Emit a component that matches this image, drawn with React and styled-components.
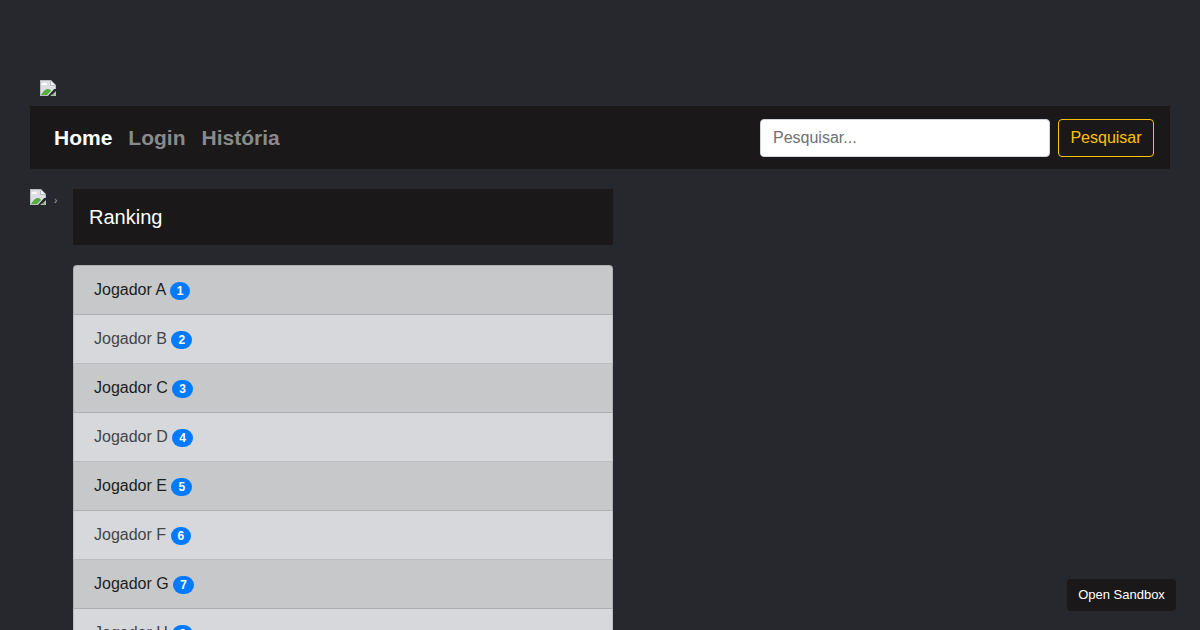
import React from "react";
import styled, { createGlobalStyle } from "styled-components";

const GlobalStyle = createGlobalStyle`
  *, *::before, *::after {
    box-sizing: border-box;
  }
  body {
    margin: 0;
    background: #27282d;
    font-family: "Liberation Sans", Arial, sans-serif;
    font-size: 16px;
    line-height: 24px;
    color: #212529;
    scrollbar-width: none;
  }
`;

const Page = styled.div`
  padding: 70px 30px 30px;
`;

const Logo = styled.a`
  display: flex;
  padding: 10px;
`;

const Icon = styled.svg`
  display: block;
  flex: none;
  width: 16px;
  height: 16px;
`;

const Navbar = styled.nav`
  display: flex;
  align-items: center;
  justify-content: space-between;
  padding: 8px 16px;
  background: #1b1819;
`;

const Links = styled.div`
  display: flex;
`;

const NavLink = styled.a`
  padding: 8px;
  font-size: 21px;
  line-height: 31px;
  font-weight: bold;
  text-decoration: none;
  color: ${({ $active }) => ($active ? "#fff" : "#898a8c")};
`;

const SearchForm = styled.form`
  display: flex;
  gap: 8px;
`;

const SearchInput = styled.input`
  width: 290px;
  height: 38px;
  padding: 6px 12px;
  border: 1px solid #ced4da;
  border-radius: 4px;
  background: #fff;
  font: inherit;
  color: #495057;

  &::placeholder {
    color: #6f7174;
    opacity: 1;
  }
`;

const SearchButton = styled.button`
  width: 96px;
  height: 38px;
  padding: 0;
  border: 1px solid #ffc107;
  border-radius: 4px;
  background: transparent;
  font: inherit;
  color: #ffc107;
`;

const Content = styled.main`
  display: flex;
  align-items: flex-start;
  margin-top: 20px;
`;

const Banner = styled.div`
  display: flex;
  align-items: flex-start;
  gap: 8px;
  flex: none;
  width: 43px;
`;

const Arrow = styled.span`
  font-size: 10px;
  color: #a4a5a8;
`;

const Board = styled.section`
  flex: 0 1 540px;
`;

const Title = styled.h1`
  margin: 0 0 20px;
  padding: 16px;
  background: #1b1819;
  font-size: 20px;
  line-height: 24px;
  font-weight: normal;
  color: #fff;
`;

const List = styled.ul`
  margin: 0;
  padding: 0;
  list-style: none;
`;

const Item = styled.li`
  padding: 12px 20px;
  border: 1px solid rgba(0, 0, 0, 0.125);
  background: ${({ $dark }) => ($dark ? "#c6c8ca" : "#d6d8db")};
  color: ${({ $dark }) => ($dark ? "#1b1e21" : "#444549")};

  & + & {
    border-top: 0;
  }
  &:first-child {
    border-radius: 4px 4px 0 0;
  }
  &:last-child {
    border-radius: 0 0 4px 4px;
  }
`;

const Badge = styled.span`
  display: inline-block;
  padding: 3px 7px;
  border-radius: 160px;
  background: #007bff;
  font-size: 12px;
  line-height: 12px;
  font-weight: bold;
  color: #fff;
  vertical-align: baseline;
`;

const SandboxButton = styled.button`
  position: fixed;
  right: 24px;
  bottom: 19px;
  width: 109px;
  height: 32px;
  padding: 0;
  border: 0;
  border-radius: 4px;
  background: #1b1819;
  font-family: inherit;
  font-size: 13px;
  line-height: 16px;
  color: #fff;
`;

const players = ["A", "B", "C", "D", "E", "F", "G", "H", "I", "J"];

function PictureIcon() {
  return (
    <Icon viewBox="0 0 16 16" aria-hidden="true">
      <path d="M0 0h11l5 5v4h-2l-6 7H0z" fill="#b9bbbe" />
      <path d="M1 1h9v5h5v3h-1l-6 6H1z" fill="#dcdee3" />
      <path d="M1 5c1-2 2-2 3-2 1-1 3 0 3 2z" fill="#fff" />
      <path d="M11 1l4 4h-4z" fill="#f3f3f5" />
      <path d="M1 15c2-3 3-5 6-6 2 0 3 0 4 2l-4 4z" fill="#58ab3f" />
      <path d="M16 11v5h-6l3-2z" fill="#b9bbbe" />
      <path d="M14 13v2h-3z" fill="#58ab3f" />
    </Icon>
  );
}

export default function App() {
  return (
    <>
      <GlobalStyle />
      <Page>
        <Logo href="#" aria-label="Home">
          <PictureIcon />
        </Logo>
        <Navbar>
          <Links>
            <NavLink href="#" $active>
              Home
            </NavLink>
            <NavLink href="#login">Login</NavLink>
            <NavLink href="#historia">História</NavLink>
          </Links>
          <SearchForm role="search" onSubmit={(e) => e.preventDefault()}>
            <SearchInput
              type="search"
              placeholder="Pesquisar..."
              aria-label="Pesquisar"
            />
            <SearchButton type="submit">Pesquisar</SearchButton>
          </SearchForm>
        </Navbar>
        <Content>
          <Banner>
            <PictureIcon />
            <Arrow>›</Arrow>
          </Banner>
          <Board>
            <Title>Ranking</Title>
            <List>
              {players.map((player, i) => (
                <Item key={player} $dark={i % 2 === 0}>
                  Jogador {player} <Badge>{i + 1}</Badge>
                </Item>
              ))}
            </List>
          </Board>
        </Content>
      </Page>
      <SandboxButton type="button">Open Sandbox</SandboxButton>
    </>
  );
}
